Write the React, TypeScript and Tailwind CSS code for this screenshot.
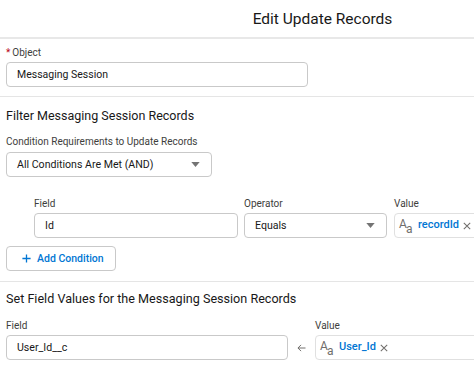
import React from "react";

const font = { fontFamily: 'Roboto, "Liberation Sans", Arial, sans-serif' };

function Aa() {
  return (
    <span className="relative inline-block w-[15px] h-[18px] text-[#706e6b] leading-none shrink-0">
      <span className="absolute left-0 top-[1px] text-[12px]">A</span>
      <span className="absolute left-[7px] top-[6px] text-[12px]">a</span>
    </span>
  );
}

function Caret() {
  return (
    <svg width="9" height="5" viewBox="0 0 10 6" className="shrink-0">
      <path d="M0 0 L10 0 L5 6 Z" fill="#747474" />
    </svg>
  );
}

function Pill({ text, className }: { text: string; className: string }) {
  return (
    <div className={"flex items-center h-[25px] border border-[#e0e0e0] rounded-[4px] pl-[4px] gap-[3px] " + className}>
      <Aa />
      <span className="text-[11px] text-[#0176d3] font-medium ml-[1px]">{text}</span>
      <svg width="8" height="8" viewBox="0 0 10 10" className="ml-[1px]">
        <path d="M1 1 L9 9 M9 1 L1 9" stroke="#706e6b" strokeWidth="1.3" />
      </svg>
    </div>
  );
}

export default function App() {
  return (
    <div className="w-[474px] h-[367px] overflow-hidden bg-white text-[#181818]" style={font}>
      <div className="w-[645px]">
        <div className="h-[39px] border-b-2 border-[#e8e8e8] flex items-center justify-center">
          <h1 className="text-[15.5px] text-[#181818] mt-[3px]">Edit Update Records</h1>
        </div>

        <div className="px-[6px] pt-[7px] pb-[9px] border-b border-[#e5e5e5]">
          <div className="text-[10px] text-[#3e3e3c] leading-[14px] h-[14px] flex items-center">
            <span className="text-[#ba0517] mr-[2px]">*</span>Object
          </div>
          <div className="mt-[2px] w-[302px] h-[25px] border border-[#c9c9c9] rounded-[4px] flex items-center pl-[10px] text-[10.5px]">
            Messaging Session
          </div>
        </div>

        <div className="px-[6px] pt-[10px]">
          <div className="text-[12.5px] leading-[18px] text-[#181818]">Filter Messaging Session Records</div>
          <div className="mt-[10px] text-[10px] leading-[14px] text-[#3e3e3c]">Condition Requirements to Update Records</div>
          <div className="mt-[3px] w-[206px] h-[25px] border border-[#c9c9c9] rounded-[4px] flex items-center justify-between pl-[10px] pr-[11px] text-[10.6px]">
            <span>All Conditions Are Met (AND)</span>
            <Caret />
          </div>

          <div className="mt-[20px] pl-[28px] flex gap-[6px]">
            <div className="w-[204px]">
              <div className="text-[10px] leading-[14px] text-[#3e3e3c]">Field</div>
              <div className="mt-[2px] h-[25px] border border-[#c9c9c9] rounded-[4px] flex items-center pl-[10px] text-[10.6px]">Id</div>
            </div>
            <div className="w-[143px]">
              <div className="text-[10px] leading-[14px] text-[#3e3e3c]">Operator</div>
              <div className="mt-[2px] h-[25px] border border-[#c9c9c9] rounded-[4px] flex items-center justify-between pl-[10px] pr-[11px] text-[10.6px]">
                <span>Equals</span>
                <Caret />
              </div>
            </div>
            <div className="ml-[1px]">
              <div className="text-[10px] leading-[14px] text-[#3e3e3c]">Value</div>
              <Pill text="recordId" className="mt-[2px] w-[200px]" />
            </div>
          </div>

          <button className="mt-[8px] h-[25px] w-[110px] border border-[#c9c9c9] rounded-[4px] flex items-center pl-[15px] gap-[6px] text-[10.5px] text-[#0176d3] font-medium">
            <svg width="9" height="9" viewBox="0 0 11 11">
              <path d="M5.5 0.5 V10.5 M0.5 5.5 H10.5" stroke="#0176d3" strokeWidth="1.6" />
            </svg>
            Add Condition
          </button>
        </div>

        <div className="mt-[10px] border-t border-[#e5e5e5] px-[6px] pt-[8px]">
          <div className="text-[12.6px] leading-[18px] text-[#181818]">Set Field Values for the Messaging Session Records</div>
          <div className="mt-[11px] flex items-end">
            <div className="w-[282px]">
              <div className="text-[10px] leading-[14px] text-[#3e3e3c]">Field</div>
              <div className="mt-[2px] h-[25px] border border-[#c9c9c9] rounded-[4px] flex items-center pl-[10px] text-[10.6px]">User_Id__c</div>
            </div>
            <div className="w-[27px] h-[25px] flex items-center justify-center">
              <svg width="9" height="8" viewBox="0 0 10 9">
                <path d="M9.5 4.5 H1 M4.5 1 L1 4.5 L4.5 8" stroke="#706e6b" strokeWidth="1.1" fill="none" />
              </svg>
            </div>
            <div>
              <div className="text-[10px] leading-[14px] text-[#3e3e3c]">Value</div>
              <Pill text="User_Id" className="mt-[2px] w-[200px]" />
            </div>
          </div>
        </div>
      </div>
    </div>
  );
}
